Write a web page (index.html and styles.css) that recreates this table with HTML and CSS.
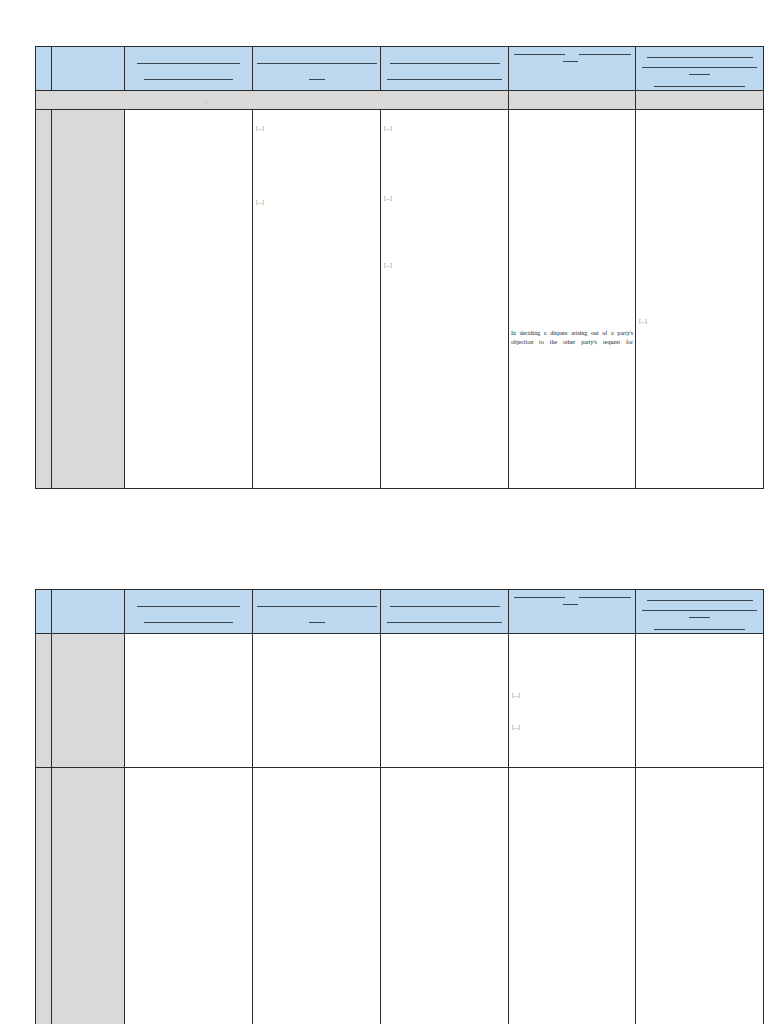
FILE: index.html
```html
<!DOCTYPE html>
<html>
<head>
<meta charset="utf-8">
<link rel="stylesheet" href="styles.css">
</head>
<body>
<div class="page">
  <table class="grid t1">
    <colgroup>
      <col class="c1"><col class="c2"><col class="c3"><col class="c4"><col class="c5"><col class="c6"><col class="c7">
    </colgroup>
    <tr class="head">
      <td></td>
      <td></td>
      <td><div class="hd hd-a"><div class="ln w103"></div><div class="ln w89"></div></div></td>
      <td><div class="hd hd-a"><div class="ln w120"></div><div class="ln w16"></div></div></td>
      <td><div class="hd hd-a"><div class="ln w110"></div><div class="ln w115"></div></div></td>
      <td><div class="hd hd-b"><div class="pair"><div class="ln w51"></div><div class="ln w52"></div></div><div class="ln w15 sh"></div></div></td>
      <td><div class="hd hd-c"><div class="ln w106"></div><div class="ln w115"></div><div class="ln w21"></div><div class="ln w91"></div></div></td>
    </tr>
    <tr class="sep">
      <td colspan="5"><span class="dash">-</span></td>
      <td></td>
      <td></td>
    </tr>
    <tr class="body1">
      <td class="grey"></td>
      <td class="grey"></td>
      <td></td>
      <td class="txt"><div class="el m14">[...]</div><div class="el m68">[...]</div></td>
      <td class="txt"><div class="el m14">[...]</div><div class="el m64">[...]</div><div class="el m61">[...]</div></td>
      <td class="txt"><p class="para">In deciding a dispute arising out of a party's objection to the other party's request for</p></td>
      <td class="txt"><div class="el m207">[...]</div></td>
    </tr>
  </table>

  <table class="grid t2">
    <colgroup>
      <col class="c1"><col class="c2"><col class="c3"><col class="c4"><col class="c5"><col class="c6"><col class="c7">
    </colgroup>
    <tr class="head">
      <td></td>
      <td></td>
      <td><div class="hd hd-a"><div class="ln w103"></div><div class="ln w89"></div></div></td>
      <td><div class="hd hd-a"><div class="ln w120"></div><div class="ln w16"></div></div></td>
      <td><div class="hd hd-a"><div class="ln w110"></div><div class="ln w115"></div></div></td>
      <td><div class="hd hd-b"><div class="pair"><div class="ln w51"></div><div class="ln w52"></div></div><div class="ln w15 sh"></div></div></td>
      <td><div class="hd hd-c"><div class="ln w106"></div><div class="ln w115"></div><div class="ln w21"></div><div class="ln w91"></div></div></td>
    </tr>
    <tr class="body2">
      <td class="grey"></td>
      <td class="grey"></td>
      <td></td>
      <td></td>
      <td></td>
      <td class="txt"><div class="el m57">[...]</div><div class="el m27">[...]</div></td>
      <td></td>
    </tr>
    <tr class="body3">
      <td class="grey"></td>
      <td class="grey"></td>
      <td></td>
      <td></td>
      <td></td>
      <td></td>
      <td></td>
    </tr>
  </table>
</div>
</body>
</html>
```

FILE: styles.css
```css
html, body {
  margin: 0;
  padding: 0;
  background: #ffffff;
}
body {
  font-family: "Liberation Serif", "Times New Roman", serif;
  color: #000;
}
.page {
  padding: 46px 0 0 35px;
}
.grid {
  border-collapse: collapse;
  table-layout: fixed;
  width: 728px;
  border: 1.5px solid #5a5a5a;
}
.grid td {
  border: 1px solid #2b2b2b;
  padding: 0;
  vertical-align: top;
}
.c1 { width: 16px; }
.c2 { width: 73px; }
.c3 { width: 128px; }
.c4 { width: 128px; }
.c5 { width: 128px; }
.c6 { width: 127px; }
.c7 { width: 128px; }

.t2 {
  margin-top: 100px;
}

.head td {
  background: #bdd7ee;
  height: 43px;
}
.hd {
  display: flex;
  flex-direction: column;
  align-items: center;
}
.hd-a {
  padding-top: 16px;
  gap: 15px;
}
.hd-b {
  padding-top: 7px;
  gap: 6px;
}
.hd-c {
  padding-top: 10px;
  gap: 9px;
}
.hd-c .ln:nth-child(3) {
  margin-top: -3px;
}
.hd-c .ln:nth-child(4) {
  margin-top: 2px;
}
.pair {
  display: flex;
  gap: 14px;
  padding-left: 1px;
}
.sh {
  margin-left: -4px;
}
.ln {
  height: 0;
  border-top: 1px solid #3a4550;
}
.w103 { width: 103px; }
.w89 { width: 89px; }
.w120 { width: 120px; }
.w16 { width: 16px; }
.w110 { width: 110px; }
.w115 { width: 115px; }
.w51 { width: 51px; }
.w52 { width: 52px; }
.w15 { width: 15px; }
.w106 { width: 106px; }
.w21 { width: 21px; }
.w91 { width: 91px; }

.sep td {
  background: #d9d9d9;
  height: 16px;
  vertical-align: middle;
}
.sep td:first-child {
  padding-left: 169px;
}
.dash {
  font-size: 6px;
  color: #777;
  position: relative;
  top: -1px;
}

.grey {
  background: #d9d9d9;
}
.body1 td {
  height: 378px;
}
.body2 td {
  height: 133px;
}
.body3 td {
  height: 300px;
}
.txt {
  padding: 0 2px 0 3px !important;
}
.el {
  font-size: 5.6px;
  line-height: 6px;
  color: #7a7a7a;
}
.m14 { margin-top: 15px; }
.m68 { margin-top: 68px; }
.m64 { margin-top: 64px; }
.m61 { margin-top: 61px; }
.m207 { margin-top: 208px; }
.m57 { margin-top: 58px; }
.m27 { margin-top: 26px; }

.para {
  margin: 219px 0 0 -1px;
  font-size: 5.95px;
  line-height: 8.5px;
  text-align: justify;
  text-align-last: justify;
  color: #222;
}
```
